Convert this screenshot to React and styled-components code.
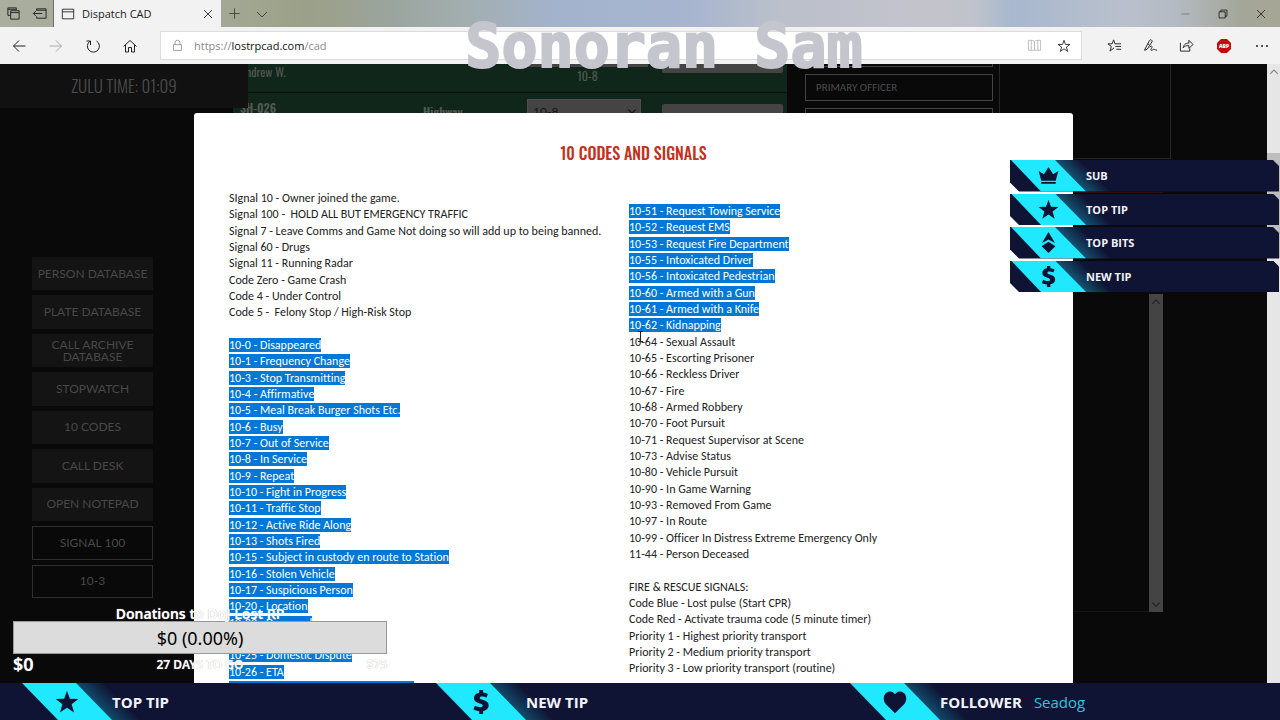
import React from "react";
import styled, { createGlobalStyle, css } from "styled-components";

const GlobalStyle = createGlobalStyle`
  *, *::before, *::after { box-sizing: border-box; }
  body { margin: 0; background: #090909; font-family: Lato, sans-serif; }
  button, input, select { font: inherit; color: inherit; margin: 0; padding: 0; border-radius: 0; }
  a { color: inherit; text-decoration: none; }
`;

const compact = `Oswald, Roboto, sans-serif`;
const body = `Carlito, Lato, sans-serif`;
const ui = `"Open Sans", sans-serif`;

const Screen = styled.div`
  position: relative;
  display: flex;
  flex-direction: column;
  height: 100vh;
  overflow: hidden;
`;

/* ---------- browser window ---------- */

const TitleBar = styled.header`
  display: flex;
  flex: none;
  height: 27px;
  background: linear-gradient(90deg, #a9ae9e 0%, #a2a894 18%, #9ba087 24%, #9ba5a0 31%, #a2aeae 36%, #a3b3ce 44%, #a7b5cf 54%, #bbc0cb 61%, #c3c3cc 72%, #c0c3cb 76%, #a8b8cf 79%, #b9c0cc 88%, #b4bac2 92%, #a3a698 97%, #a6a695 100%);
`;

const TabTools = styled.div`
  display: flex;
  align-items: center;
  justify-content: space-around;
  width: 54px;
  border-right: 1px solid #6c7068;
`;

const IconButton = styled.button`
  display: grid;
  place-items: center;
  width: ${(p) => p.$w || 37}px;
  height: 100%;
  border: 0;
  background: none;
  color: ${(p) => p.$color || "#222"};
`;

const Tab = styled.div`
  display: flex;
  align-items: center;
  gap: 7px;
  width: 167px;
  padding: 0 6px 0 7px;
  background: #f2f2f2;
  color: #222;
  font: 11px ${ui};
`;

const TabTitle = styled.span`
  flex: 1;
  white-space: nowrap;
`;

const Spacer = styled.div`
  flex: 1;
`;

const Toolbar = styled.nav`
  display: flex;
  flex: none;
  align-items: center;
  height: 37px;
  background: #f2f2f2;
`;

const NavButtons = styled.div`
  display: flex;
  width: 160px;
  height: 28px;
`;

const Address = styled.div`
  display: flex;
  flex: 1;
  align-items: center;
  height: 29px;
  padding-left: 10px;
  border: 1px solid #dcdcdc;
  background: #fff;
  font: 11px ${ui};
  color: #8a8a8a;
`;

const Url = styled.a`
  flex: 1;
  padding-left: 10px;
  b { color: #111; font-weight: 400; }
`;

const ToolButtons = styled.div`
  display: flex;
  width: 198px;
  height: 28px;
  padding-left: 14px;
`;

/* ---------- CAD page ---------- */

const Page = styled.main`
  position: relative;
  display: flex;
  flex: 1;
  min-height: 0;
  background: #090909;
`;

const Sidebar = styled.aside`
  display: flex;
  flex-direction: column;
  flex: none;
  width: 233px;
`;

const Zulu = styled.div`
  position: relative;
  z-index: 1;
  flex: none;
  width: 248px;
  height: 44px;
  background: #111;
  color: #4c4c4c;
  font: 300 17px/44px ${compact};
  text-align: center;
`;

const Menu = styled.div`
  display: grid;
  grid-auto-rows: 1fr;
  gap: 5px;
  width: 121px;
  height: 341px;
  margin: 149px 0 0 32px;
`;

const MenuButton = styled.button`
  border: 1px solid ${(p) => (p.$outlined ? "#2f2f2f" : "#141414")};
  background: ${(p) => (p.$outlined ? "transparent" : "#141414")};
  color: #484848;
  font-size: 12px;
  line-height: 12px;
`;

const Units = styled.table`
  flex: none;
  align-self: flex-start;
  width: 554px;
  table-layout: fixed;
  border-collapse: collapse;
  background: #10261a;
  color: #505951;
  font: 12px/16px ${compact};
  td { padding: 0; vertical-align: top; }
`;

const UnitRow = styled.tr`
  height: ${(p) => p.$h}px;
  border-bottom: 1px solid #080d0a;
`;

const Name = styled.div`
  padding-left: 7px;
  font-weight: ${(p) => (p.$bold ? 600 : 400)};
  line-height: ${(p) => (p.$bold ? 30 : 16)}px;
`;

const Zone = styled.div`
  font-weight: 600;
  line-height: 38px;
`;

const StatusText = styled.div`
  width: 121px;
  padding-top: 1px;
  border-top: 3px solid #444;
  text-align: center;
`;

const Select = styled.div`
  position: relative;
  width: 114px;
  margin-top: 6px;
  background: #444;
  color: #151515;
  select {
    width: 100%;
    height: 26px;
    padding-left: 5px;
    border: 1px solid #4c4c4c;
    background: none;
    appearance: none;
    font-family: Lato, sans-serif;
  }
  svg { position: absolute; right: 3px; top: 6px; }
`;

const GreyField = styled.input`
  display: block;
  width: 121px;
  height: ${(p) => p.$h}px;
  margin-top: ${(p) => p.$top || 0}px;
  border: 0;
  border-radius: 2px;
  background: #444;
`;

const CallForm = styled.form`
  display: flex;
  flex-direction: column;
  flex: none;
  gap: 7px;
  width: 213px;
  height: 94px;
  padding: 0 6px 0 18px;
  border-right: 1px solid #262626;
`;

const CallField = styled.input`
  flex: none;
  width: 188px;
  height: ${(p) => p.$h || 27}px;
  padding-left: 10px;
  border: 1px solid #444;
  border-top-width: ${(p) => (p.$h ? 0 : 1)}px;
  background: transparent;
  font: 11px ${body};
  &::placeholder { color: #4c4c4c; opacity: 1; }
`;

const SideColumn = styled.section`
  display: flex;
  flex-direction: column;
  gap: 33px;
  width: 171px;
`;

const MapPanel = styled.div`
  height: 95px;
  border: solid #262626;
  border-width: 0 1px 1px 0;
`;

const LogPanel = styled.div`
  display: flex;
  justify-content: flex-end;
  width: 163px;
  height: 420px;
  border-top: 1px solid #350b10;
  border-bottom: 1px solid #161616;
`;

const LogScroll = styled.div`
  display: flex;
  flex-direction: column;
  justify-content: space-between;
  align-items: center;
  width: 14px;
  height: 318px;
  margin-top: 101px;
  padding: 2px 0;
  background: #444;
  color: #222;
`;

const PageScroll = styled.div`
  flex: none;
  width: 13px;
  padding-top: 2px;
  background: #e6e6e6;
  color: #888;
  text-align: center;
  line-height: 0;
`;

const Thumb = styled.div`
  height: 105px;
  margin-top: 75px;
  background: #bdbdbd;
`;

/* ---------- code list dialog ---------- */

const Backdrop = styled.div`
  position: absolute;
  inset: 49px 13px 0 0;
  display: flex;
  justify-content: center;
`;

const Dialog = styled.section`
  width: 879px;
  padding: 0 35px;
  border-radius: 3px;
  background: #fff;
`;

const DialogTitle = styled.h1`
  margin: 30px 0 0;
  color: #c4301b;
  font: 500 16px/20px ${compact};
  text-align: center;
`;

const Columns = styled.div`
  display: grid;
  grid-template-columns: 400px 1fr;
  align-items: start;
  margin-top: 27px;
`;

const CodeList = styled.ul`
  margin: 0;
  padding: ${(p) => p.$top || 0}px 0 0;
  list-style: none;
  color: #222;
  font-family: ${body};
  font-size: 12px;
  font-variant-ligatures: none;
  line-height: 1.361;
  white-space: pre;
`;

const Code = styled.li`
  position: relative;
  min-height: 1lh;
  ${(p) => p.$selected && css`
    span { background: #0078d7; color: #fff; }
  `}
`;

const Caret = styled.svg`
  position: absolute;
  left: 8px;
  top: -3px;
`;

/* ---------- stream overlay ---------- */

const Streamer = styled.div`
  position: absolute;
  top: 11px;
  left: 0;
  right: 0;
  padding-left: 48px;
  color: #c5c5ce;
  font: 700 60px/70px "DejaVu Sans Mono", monospace;
  text-align: center;
  -webkit-text-stroke: 2px #c5c5ce;
`;

const Alerts = styled.aside`
  position: absolute;
  top: 160px;
  right: 1px;
  display: grid;
  grid-auto-rows: 1fr;
  gap: 2px;
  width: 269px;
  height: 132px;
`;

const Alert = styled.div`
  display: flex;
  align-items: center;
  background: linear-gradient(45deg, #101434 50px, #145a78 52px, #101434 72px);
  clip-path: polygon(0 0, calc(100% - 6px) 0, 100% 6px, 100% 100%, 9px 100%, 0 calc(100% - 9px));
  color: #f2f3fa;
  font: 700 11px ${ui};
`;

const Badge = styled.div`
  display: grid;
  place-items: center;
  flex: none;
  width: ${(p) => (p.$large ? 90 : 76)}px;
  height: 100%;
  background: #20e8ff;
  clip-path: ${(p) => (p.$large
    ? "polygon(0 0, 54px 0, 100% 100%, 36px 100%)"
    : "polygon(1px 0, 45px 0, 100% 100%, 31px 100%)")};
  color: #101434;
`;

const Ticker = styled.footer`
  position: absolute;
  inset: auto 0 0 0;
  display: flex;
  height: 37px;
  padding-left: 22px;
  background: #101434;
  overflow: hidden;
`;

const TickerItem = styled.div`
  display: flex;
  flex: 0 0 414px;
  align-items: center;
  background: linear-gradient(45deg, #101434 60px, #125070 62px, #101434 84px);
  color: #f2f3fa;
  font: 700 15px ${ui};
  em { margin-left: 12px; color: #2fc4dc; font-style: normal; font-weight: 400; }
`;

const Donation = styled.section`
  position: absolute;
  left: 13px;
  bottom: 45px;
  width: 374px;
  color: #fff;
  font-family: "Noto Sans", sans-serif;
  font-weight: 600;
  text-shadow: 0 0 1px #aaa;
`;

const DonationTitle = styled.div`
  font-size: 14px;
  line-height: 14px;
  text-align: center;
`;

const DonationBar = styled.div`
  height: 33px;
  border: 1px solid #999;
  background: #dcdcdc;
  color: #000;
  font-size: 18px;
  font-weight: 400;
  line-height: 32px;
  text-align: center;
  text-shadow: none;
`;

const DonationFoot = styled.div`
  display: grid;
  grid-template-columns: 1fr auto 1fr;
  align-items: center;
  height: 21px;
  font-size: 12px;
  strong { font-size: 18px; font-weight: 600; line-height: 21px; }
  span:last-child { text-align: right; }
`;

/* ---------- icons ---------- */

const Icon = ({ size = 16, w = 1, children, fill = "none" }) => (
  <svg width={size} height={size} viewBox="0 0 16 16" fill={fill} stroke={fill === "none" ? "currentColor" : "none"} strokeWidth={w} aria-hidden="true">
    {children}
  </svg>
);

const art = {
  tabs: <><path d="M2 10V2h9v2M2 3.500h9M5 5h9v9H5zM5 7h9" /><path d="M2 10h3" /></>,
  aside: <path d="M5 5V3h10v10H5v-2M5 4.500h10M1.500 8H11M4 5.500 1.500 8 4 10.500" />,
  page: <path d="M1.500 2.500h13v11h-13zM1.500 5.500h13" />,
  close: <path d="m3.500 3.500 9 9m0-9-9 9" />,
  plus: <path d="M8 2.500v11M2.500 8h11" />,
  down: <path d="m3 6 5 5 5-5" />,
  up: <path d="m3 10.500 5-5 5 5" />,
  back: <path d="M14.500 8h-12M8 2.500 2.500 8 8 13.500" />,
  forward: <path d="M1.500 8h12M8 2.500 13.500 8 8 13.500" />,
  reload: <path d="M5 3.200A6 6 0 1 0 11.500 3M5.500 7V3H1.500" />,
  home: <path d="m1.500 8.500 6.500-6 6.500 6M3.500 7v7h3v-4.500h3V14h3V7" />,
  lock: <path d="M3 7h10v7H3zM5 7V4.500a3 3 0 0 1 6 0V7" />,
  book: <path d="M8 3.500v9.500M8 3.500C7 2.500 5 2.500 1.500 2.500V13H8M8 3.500c1-1 3-1 6.500-1V13H8M4.500 2.500V13M11.500 2.500V13" />,
  star: <path d="m8 1.500 1.700 4.700 5 .1-4 3 1.500 4.900L8 11.300l-4.200 2.900 1.500-4.900-4-3 5-.1z" />,
  favs: <path d="M7.500 10.500 3.200 14l1.400-5L1 6.200h4.500L7 2l1.500 4.200H15M9 9h6M10 12h5" />,
  pen: <path d="M1.500 13 7 2.500c1-1.500 3.500 0 2.500 1.700L4.500 12l-3 1.200M5 6l2 1.500M7 10c2-2.500 3.500-1 2 1s0 3 1.500 1.500S12 13 15 13" />,
  share: <path d="M1.500 5v9h10v-3M4.500 10.500c.5-4 3-5 6-5v-3L15 7l-4.500 4V8c-2.500 0-4.500.5-6 2.500z" />,
  min: <path d="M4 8h9" />,
  restore: <path d="M3.500 5.500h7v7h-7zM5.500 5.500v-2h7v7h-2" />,
};

const solid = {
  crown: <path d="M.5 4.500 4.500 7 8 1.500 11.500 7l4-2.500L13.500 12h-11zM2.500 13h11v1.300h-11z" />,
  star: <path d="m8 .5 1.900 5.400 5.700.1-4.500 3.500 1.600 5.500L8 11.800l-4.700 3.200 1.600-5.500L.4 6l5.700-.1z" />,
  bits: <path d="m8 0 5 8.300L8 5.800 3 8.300zM8 7.500l5.300 3.300L8 16l-5.300-5.200z" />,
  heart: <path d="M8 15.500 1.800 9.300C-.2 7 .2 3.200 2.300 1.800 4.300.3 6.800.8 8 2.900c1.200-2.100 3.700-2.600 5.700-1.100 2.100 1.400 2.500 5.200.5 7.500z" />,
  dollar: <path d="M6.800 0h2.600v1.700c1.300.1 2.400.5 3.200 1l-.9 2.300c-1.600-.8-4.400-1.200-4.600.2-.2 1.800 6.100 1 6 5.100 0 1.900-1.500 3.300-3.700 3.700v2H6.800v-1.900c-1.500-.1-2.900-.5-3.800-1.100l.9-2.500c1.700 1 5.200 1.600 5.300-.1.100-1.800-6-1.100-5.900-5 0-1.900 1.300-3.200 3.500-3.600z" />,
};

const Chevron = ({ kind, size = 12 }) => <Icon size={size} w={1.5}>{art[kind]}</Icon>;

/* ---------- content ---------- */

const menu = ["PERSON DATABASE", "PLATE DATABASE", "CALL ARCHIVE DATABASE", "STOPWATCH", "10 CODES", "CALL DESK", "OPEN NOTEPAD", "SIGNAL 100", "10-3"];

const signals = [
  "SIgnal 10 - Owner joined the game.",
  "Signal 100 -  HOLD ALL BUT EMERGENCY TRAFFIC",
  "Signal 7 - Leave Comms and Game Not doing so will add up to being banned.",
  "Signal 60 - Drugs",
  "Signal 11 - Running Radar",
  "Code Zero - Game Crash",
  "Code 4 - Under Control",
  "Code 5 -  Felony Stop / High-Risk Stop",
  "",
];

const leftSelected = [
  "10-0 - Disappeared", "10-1 - Frequency Change", "10-3 - Stop Transmitting", "10-4 - Affirmative",
  "10-5 - Meal Break Burger Shots Etc.", "10-6 - Busy", "10-7 - Out of Service", "10-8 - In Service",
  "10-9 - Repeat", "10-10 - Fight in Progress", "10-11 - Traffic Stop", "10-12 - Active Ride Along",
  "10-13 - Shots Fired", "10-15 - Subject in custody en route to Station", "10-16 - Stolen Vehicle",
  "10-17 - Suspicious Person", "10-20 - Location", "10-22 - Disregard", "10-23 - On Scene",
  "10-25 - Domestic Dispute", "10-26 - ETA", "10-27 - Drivers License Check for Valid",
];

const rightSelected = [
  "10-51 - Request Towing Service", "10-52 - Request EMS", "10-53 - Request Fire Department",
  "10-55 - Intoxicated Driver", "10-56 - Intoxicated Pedestrian", "10-60 - Armed with a Gun",
  "10-61 - Armed with a Knife", "10-62 - Kidnapping",
];

const rightPlain = [
  "10-64 - Sexual Assault", "10-65 - Escorting Prisoner", "10-66 - Reckless Driver", "10-67 - Fire",
  "10-68 - Armed Robbery", "10-70 - Foot Pursuit", "10-71 - Request Supervisor at Scene",
  "10-73 - Advise Status", "10-80 - Vehicle Pursuit", "10-90 - In Game Warning",
  "10-93 - Removed From Game", "10-97 - In Route", "10-99 - Officer In Distress Extreme Emergency Only",
  "11-44 - Person Deceased", "", "FIRE & RESCUE SIGNALS:", "Code Blue - Lost pulse (Start CPR)",
  "Code Red - Activate trauma code (5 minute timer)", "Priority 1 - Highest priority transport",
  "Priority 2 - Medium priority transport", "Priority 3 - Low priority transport (routine)",
];

const alerts = [["crown", "SUB"], ["star", "TOP TIP"], ["bits", "TOP BITS"], ["dollar", "NEW TIP"]];
const ticker = [["star", "TOP TIP"], ["dollar", "NEW TIP"], ["heart", "FOLLOWER", "Seadog"]];

const BarButton = ({ icon, label, size = 16, ...rest }) => (
  <IconButton type="button" aria-label={label} {...rest}><Icon size={size}>{art[icon]}</Icon></IconButton>
);

function Browser() {
  return (
    <>
      <TitleBar>
        <TabTools>
          <BarButton icon="tabs" label="Tabs" $w={26} size={15} />
          <BarButton icon="aside" label="Set tabs aside" $w={26} size={15} />
        </TabTools>
        <Tab>
          <Icon size={14}>{art.page}</Icon>
          <TabTitle>Dispatch CAD</TabTitle>
          <BarButton icon="close" label="Close tab" $w={14} size={14} />
        </Tab>
        <BarButton icon="plus" label="New tab" $w={27} size={15} $color="#444" />
        <BarButton icon="down" label="Tab previews" $w={27} $color="#444" />
        <Spacer />
        <BarButton icon="min" label="Minimize" $w={38} size={14} $color="#777" />
        <BarButton icon="restore" label="Restore" $w={38} size={14} />
        <BarButton icon="close" label="Close" $w={38} size={14} />
      </TitleBar>
      <Toolbar>
        <NavButtons>
          <BarButton icon="back" label="Back" />
          <BarButton icon="forward" label="Forward" $color="#aaa" />
          <BarButton icon="reload" label="Reload" />
          <BarButton icon="home" label="Home" />
        </NavButtons>
        <Address>
          <Icon size={13}>{art.lock}</Icon>
          <Url href="#cad">https://<b>lostrpcad.com</b>/cad</Url>
          <BarButton icon="book" label="Reading view" $w={26} size={15} $color="#bbb" />
          <BarButton icon="star" label="Add favourite" $w={34} size={14} />
        </Address>
        <ToolButtons>
          <BarButton icon="favs" label="Favourites" $w={36} size={15} />
          <BarButton icon="pen" label="Notes" $w={36} size={15} />
          <BarButton icon="share" label="Share" $w={37} size={15} />
          <IconButton type="button" aria-label="Adblock Plus" $w={38}>
            <svg width="14" height="14" viewBox="0 0 14 14">
              <path d="M4 0h6l4 4v6l-4 4H4l-4-4V4z" fill="#c40b0b" />
              <text x="7" y="9" fill="#fff" fontFamily="Open Sans" fontWeight="800" fontSize="5" textAnchor="middle">ABP</text>
            </svg>
          </IconButton>
          <IconButton type="button" aria-label="More" $w={37}>
            <Icon fill="currentColor"><circle cx="3" cy="8" r="1" /><circle cx="8" cy="8" r="1" /><circle cx="13" cy="8" r="1" /></Icon>
          </IconButton>
        </ToolButtons>
      </Toolbar>
    </>
  );
}

function CodesDialog() {
  return (
    <Backdrop>
      <Dialog role="dialog" aria-labelledby="codes">
        <DialogTitle id="codes">10 CODES AND SIGNALS</DialogTitle>
        <Columns>
          <CodeList>
            {signals.map((t, i) => <Code key={i}>{t}</Code>)}
            {leftSelected.map((t) => <Code key={t} $selected><span>{t}</span></Code>)}
          </CodeList>
          <CodeList $top={13}>
            {rightSelected.map((t) => <Code key={t} $selected><span>{t}</span></Code>)}
            {rightPlain.map((t, i) => (
              <Code key={i}>
                {t}
                {i === 0 && (
                  <Caret width="7" height="11" viewBox="0 0 7 11" fill="none" stroke="#222"><path d="M1 .5h5M3.500 .5v10M1 10.500h5" /></Caret>
                )}
              </Code>
            ))}
          </CodeList>
        </Columns>
      </Dialog>
    </Backdrop>
  );
}

export default function App() {
  return (
    <Screen>
      <GlobalStyle />
      <Browser />
      <Page>
        <Sidebar>
          <Zulu>ZULU TIME: 01:09</Zulu>
          <Menu>
            {menu.map((m, i) => <MenuButton type="button" key={m} $outlined={i > 6}>{m}</MenuButton>)}
          </Menu>
        </Sidebar>
        <Units>
          <colgroup><col width="190" /><col width="104" /><col width="135" /><col width="125" /></colgroup>
          <tbody>
            <UnitRow $h={28}>
              <td><Name>Andrew W.</Name></td>
              <td />
              <td><StatusText>10-8</StatusText></td>
              <td><GreyField $h={9} aria-label="Unit note" /></td>
            </UnitRow>
            <UnitRow $h={40}>
              <td><Name $bold>SH-026</Name></td>
              <td><Zone>Highway</Zone></td>
              <td>
                <Select>
                  <select aria-label="Unit status" defaultValue="10-8"><option>10-8</option></select>
                  <Chevron kind="down" />
                </Select>
              </td>
              <td><GreyField $h={26} $top={11} aria-label="Unit location" /></td>
            </UnitRow>
          </tbody>
        </Units>
        <CallForm>
          <CallField $h={3} aria-label="Call type" />
          <CallField placeholder="PRIMARY OFFICER" aria-label="Primary officer" />
          <CallField aria-label="Secondary officer" />
        </CallForm>
        <SideColumn>
          <MapPanel />
          <LogPanel>
            <LogScroll><Chevron kind="up" /><Chevron kind="down" /></LogScroll>
          </LogPanel>
        </SideColumn>
        <Spacer />
        <PageScroll><Chevron kind="up" /><Thumb /></PageScroll>
        <CodesDialog />
      </Page>
      <Streamer>Sonoran Sam</Streamer>
      <Alerts>
        {alerts.map(([icon, label]) => (
          <Alert key={label}><Badge><Icon size={21} fill="currentColor">{solid[icon]}</Icon></Badge>{label}</Alert>
        ))}
      </Alerts>
      <Donation>
        <DonationTitle>Donations to DoJ Lost RP</DonationTitle>
        <DonationBar>$0 (0.00%)</DonationBar>
        <DonationFoot><strong>$0</strong><span>27 DAYS TO GO</span><span>$75</span></DonationFoot>
      </Donation>
      <Ticker>
        {ticker.map(([icon, label, who]) => (
          <TickerItem key={label}>
            <Badge $large><Icon size={24} fill="currentColor">{solid[icon]}</Icon></Badge>
            {label}{who && <em>{who}</em>}
          </TickerItem>
        ))}
      </Ticker>
    </Screen>
  );
}
